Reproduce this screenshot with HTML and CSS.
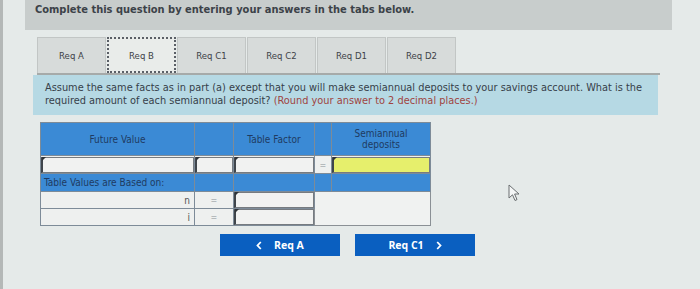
FILE: index.html
```html
<!DOCTYPE html>
<html>
<head>
<meta charset="utf-8">
<link rel="stylesheet" href="styles.css">
</head>
<body>
<div class="page">
  <div class="banner">Complete this question by entering your answers in the tabs below.</div>
  <div class="tabs">
    <div class="tab">Req A</div>
    <div class="tab active">Req B</div>
    <div class="tab">Req C1</div>
    <div class="tab">Req C2</div>
    <div class="tab">Req D1</div>
    <div class="tab">Req D2</div>
  </div>
  <div class="info">Assume the same facts as in part (a) except that you will make semiannual deposits to your savings account. What is the<br>required amount of each semiannual deposit? <span class="hint">(Round your answer to 2 decimal places.)</span></div>
  <table class="grid">
    <colgroup>
      <col class="c1"><col class="c2"><col class="c3"><col class="c4"><col class="c5">
    </colgroup>
    <tr class="head">
      <td>Future Value</td>
      <td></td>
      <td>Table Factor</td>
      <td></td>
      <td class="two">Semiannual<br>deposits</td>
    </tr>
    <tr class="inputs">
      <td><div class="in"></div></td>
      <td><div class="in"></div></td>
      <td><div class="in"></div></td>
      <td class="eq">=</td>
      <td><div class="in yellow"></div></td>
    </tr>
    <tr class="band">
      <td class="left">Table Values are Based on:</td>
      <td></td><td></td><td></td><td></td>
    </tr>
    <tr class="vals">
      <td class="lbl">n</td>
      <td class="eq">=</td>
      <td><div class="in"></div></td>
      <td colspan="2" rowspan="2" class="blank"></td>
    </tr>
    <tr class="vals">
      <td class="lbl">i</td>
      <td class="eq">=</td>
      <td><div class="in"></div></td>
    </tr>
  </table>
  <div class="nav">
    <div class="btn"><svg class="chev" width="6" height="9" viewBox="0 0 6 9"><path d="M4.8 1 L1.5 4.5 L4.8 8" fill="none" stroke="#fff" stroke-width="1.8"/></svg><span>Req A</span></div>
    <div class="btn"><span>Req C1</span><svg class="chev" width="6" height="9" viewBox="0 0 6 9"><path d="M1.2 1 L4.5 4.5 L1.2 8" fill="none" stroke="#fff" stroke-width="1.8"/></svg></div>
  </div>
</div>
<svg class="cursor" width="12" height="18" viewBox="0 0 12 18"><path d="M1 1 L1 14 L4.5 10.8 L7 16.5 L9 15.6 L6.6 10 L11 10 Z" fill="#f4f6f6" stroke="#6a6e70" stroke-width="1"/></svg>
</body>
</html>
```
FILE: styles.css
```css
html, body {
  margin: 0;
  padding: 0;
}
body {
  width: 700px;
  height: 289px;
  background: #e5eae9;
  border-left: 3px solid #b4b8b7;
  box-sizing: border-box;
  font-family: "DejaVu Sans Condensed", "DejaVu Sans", sans-serif;
  position: relative;
  overflow: hidden;
}
.page {
  padding-left: 22px;
}
.banner {
  width: 647px;
  height: 30px;
  background: #c8cdcc;
  box-sizing: border-box;
  padding: 3px 0 0 10px;
  font-weight: bold;
  font-size: 11px;
  color: #3c4248;
}
.tabs {
  display: flex;
  margin: 7px 0 0 12px;
  width: 623px;
  border-bottom: 2px solid #a6aaa9;
  gap: 1px;
}
.tab {
  width: 69px;
  height: 36px;
  box-sizing: border-box;
  background: #d7dbda;
  border: 1px solid #c2c6c5;
  border-bottom: none;
  display: flex;
  align-items: center;
  justify-content: center;
  font-size: 9.5px;
  color: #3d4247;
}
.tab.active {
  background: #e9ecea;
  border-color: transparent;
  outline: 2px dotted #5a5f66;
  outline-offset: -2px;
}
.info {
  margin-left: 8px;
  width: 625px;
  height: 40px;
  box-sizing: border-box;
  background: #b6d9e4;
  padding: 7px 0 0 12px;
  font-size: 10.9px;
  line-height: 12.5px;
  color: #364049;
  white-space: nowrap;
}
.hint {
  color: #a0443f;
}
.grid {
  margin: 7px 0 0 15px;
  border-collapse: collapse;
  table-layout: fixed;
  width: 390px;
  font-size: 10px;
  color: #1f3b62;
}
.c1 { width: 154px; }
.c2 { width: 39px; }
.c3 { width: 81px; }
.c4 { width: 17px; }
.c5 { width: 99px; }
.grid td {
  padding: 0;
  border: 1px solid #7d8b98;
  text-align: center;
  vertical-align: middle;
}
.head td {
  background: #3b8ad5;
  height: 32px;
}
.head td.two {
  line-height: 11px;
}
.inputs td {
  background: #eef0ef;
  height: 17px;
}
.in {
  position: relative;
  height: 16px;
  box-sizing: border-box;
  background: #f1f2f1;
  border: 1px solid #767b80;
  border-left: 2px solid #3f454b;
}
.in::before {
  content: "";
  position: absolute;
  left: -1px;
  top: -1px;
  border-top: 4px solid #2f3439;
  border-right: 4px solid transparent;
}
.in.yellow {
  background: #e6ef6c;
}
.eq {
  color: #8a9196;
  font-size: 9px;
  background: #eef0ef;
}
.band td {
  background: #3b8ad5;
  height: 17px;
}
.band td.left {
  text-align: left;
  padding-left: 3px;
}
.vals td {
  background: #eef0ef;
  height: 16px;
}
.vals td.lbl {
  text-align: right;
  padding-right: 4px;
  color: #555;
}
.vals td.blank {
  background: #f0f2f1;
  border: 1px solid #8a9095;
}
.nav {
  display: flex;
  gap: 15px;
  margin: 8px 0 0 195px;
}
.btn {
  width: 120px;
  height: 22px;
  background: #0a5fc0;
  color: #fff;
  font-weight: bold;
  font-size: 10.5px;
  display: flex;
  align-items: center;
  justify-content: center;
  gap: 12px;
  font-family: "Open Sans", "DejaVu Sans", sans-serif;
}
.cursor {
  position: absolute;
  left: 505px;
  top: 184px;
}
```
